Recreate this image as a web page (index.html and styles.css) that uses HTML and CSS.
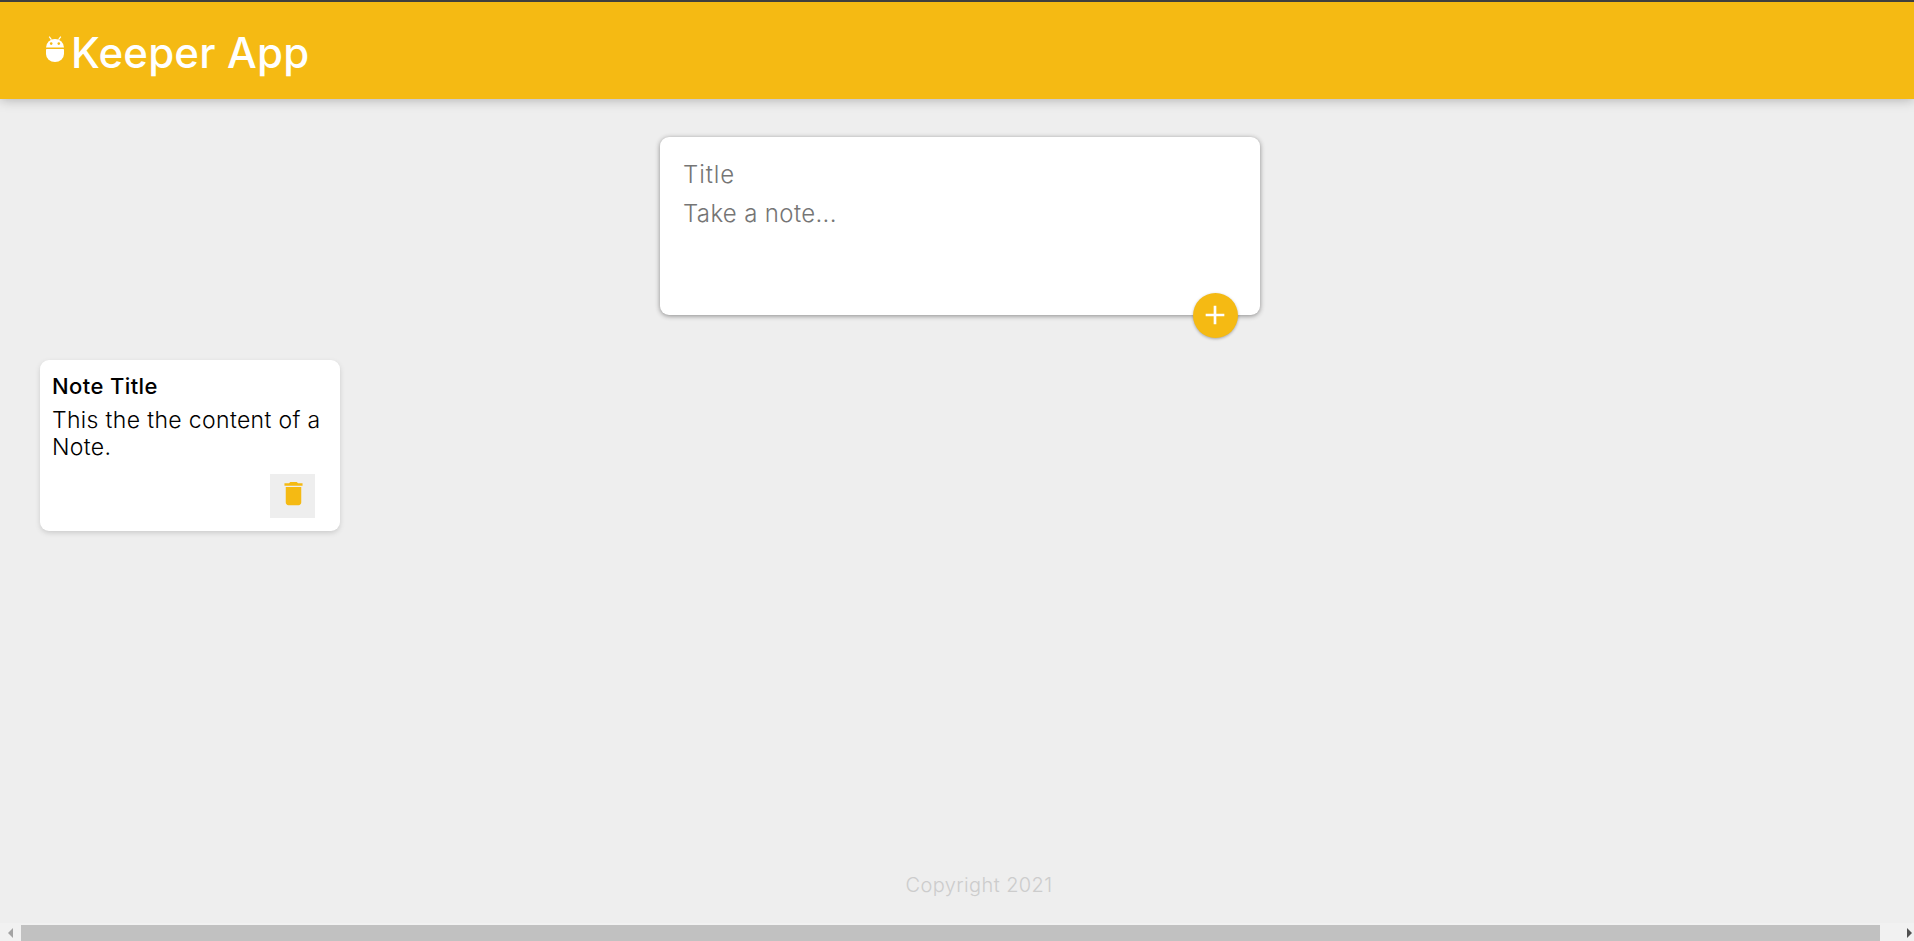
FILE: index.html
```html
<!DOCTYPE html>
<html lang="en">
<head>
<meta charset="utf-8">
<title>Keeper App</title>
<link rel="stylesheet" href="styles.css">
</head>
<body>
<header class="header">
  <svg class="logo" viewBox="0 0 18 26" aria-hidden="true">
    <path class="logo-fill" d="M1 13h16c.6 0 1 .4 1 1v4a9 8 0 0 1-18 0v-4c0-.6.4-1 1-1z"/>
    <path class="logo-fill" d="M0 11.5A9 8.5 0 0 1 18 11.5z"/>
    <path class="logo-line" d="M3.2 .6l2.2 3M14.8 .6l-2.2 3"/>
    <circle class="logo-eye" cx="5.2" cy="7.6" r="1.3"/>
    <circle class="logo-eye" cx="12.8" cy="7.6" r="1.3"/>
  </svg>
  <h1 class="brand">Keeper App</h1>
</header>
<main class="main">
  <div class="form-row">
    <form class="create">
      <div class="field title-field">Title</div>
      <div class="field">Take a note...</div>
      <button class="add" type="button" aria-label="Add">
        <svg class="add-icon" viewBox="0 0 24 24"><path d="M19 13h-6v6h-2v-6H5v-2h6V5h2v6h6v2z"/></svg>
      </button>
    </form>
  </div>
  <article class="note">
    <h2 class="note-title">Note Title</h2>
    <p class="note-text">This the the content of a Note.</p>
    <button class="delete" type="button" aria-label="Delete">
      <svg class="delete-icon" viewBox="0 0 24 24"><path d="M6 19c0 1.1.9 2 2 2h8c1.1 0 2-.9 2-2V7H6v12zM19 4h-3.5l-1-1h-5l-1 1H5v2h14V4z"/></svg>
    </button>
  </article>
</main>
<footer class="footer">Copyright 2021</footer>
<div class="scrollbar" aria-hidden="true">
  <div class="sb-btn sb-left"><span class="arrow-left"></span></div>
  <div class="sb-thumb"></div>
  <div class="sb-btn sb-right"><span class="arrow-right"></span></div>
</div>
</body>
</html>
```
FILE: styles.css
```css
* { box-sizing: border-box; }
html, body { margin: 0; height: 941px; overflow: hidden; }
body {
  background: #eeeeee;
  font-family: Inter, "Open Sans", sans-serif;
  display: flex;
  flex-direction: column;
}
.header {
  height: 99px;
  flex: none;
  background: #f5ba13;
  border-top: 2px solid #3e3e3e;
  box-shadow: 0 0 12px rgba(0, 0, 0, 0.3);
  display: flex;
  align-items: center;
  padding: 0 0 3px 46px;
  gap: 7px;
}
.logo { width: 18px; height: 26px; flex: none; }
.logo-fill { fill: #fff; }
.logo-line { stroke: #fff; stroke-width: 1.2; fill: none; }
.logo-eye { fill: #f5ba13; }
.brand {
  margin: 0;
  padding-top: 8px;
  color: #fff;
  font-family: Inter, sans-serif;
  font-size: 42px;
  font-weight: 500;
  line-height: 1;
  letter-spacing: 0.2px;
}
.main { flex: 1; padding: 38px 0 0 40px; }
.form-row { display: flex; justify-content: center; margin-left: -40px; }
.create {
  position: relative;
  width: 600px;
  height: 178px;
  margin-left: 6px;
  padding: 23px 24px 20px 23px;
  background: #fff;
  border-radius: 9px;
  box-shadow: 0 1px 5px #8a8989;
}
.field {
  font-size: 24px;
  line-height: 30px;
  color: #757575;
  font-weight: 300;
  letter-spacing: 0.35px;
}
.title-field { margin-bottom: 9px; letter-spacing: 0.9px; }
.add {
  position: absolute;
  right: 22px;
  bottom: -23px;
  width: 45px;
  height: 45px;
  padding: 0 2px 1px 0;
  border: 0;
  border-radius: 50%;
  background: #f5ba13;
  box-shadow: 0 1px 3px rgba(0, 0, 0, 0.3);
  display: flex;
  align-items: center;
  justify-content: center;
}
.add-icon { width: 32px; height: 32px; fill: #fff; }
.note {
  width: 300px;
  height: 171px;
  margin-top: 45px;
  padding: 13px 13px 13px 12px;
  background: #fff;
  border-radius: 9px;
  box-shadow: 0 2px 5px #ccc;
  display: flex;
  flex-direction: column;
}
.note-title {
  margin: 0 0 7px;
  font-size: 22px;
  line-height: 27px;
  font-weight: 500;
  color: #000;
  letter-spacing: 0.4px;
}
.note-text {
  margin: 0;
  font-size: 23px;
  line-height: 27px;
  font-weight: 300;
  color: #000;
  letter-spacing: 0.35px;
}
.delete {
  align-self: flex-end;
  width: 45px;
  height: 45px;
  margin: 13px 12px 0 0;
  padding: 0 0 6px 1px;
  border: 0;
  background: #eeeeee;
  display: flex;
  align-items: center;
  justify-content: center;
}
.delete-icon { width: 31px; height: 31px; fill: #f5ba13; }
.footer {
  flex: none;
  padding: 0 0 24px 44px;
  text-align: center;
  font-size: 20px;
  line-height: 28px;
  color: #ccc;
  letter-spacing: 0.4px;
  font-weight: 300;
}
.scrollbar {
  flex: none;
  height: 18px;
  background: #f1f1f1;
  display: flex;
  align-items: flex-end;
}
.sb-btn { height: 16px; display: flex; align-items: center; }
.sb-left { width: 21px; padding-left: 8px; }
.sb-right { width: 34px; justify-content: flex-end; padding-right: 2px; }
.sb-thumb { flex: 1; height: 16px; background: #c1c1c1; }
.arrow-left { border-style: solid; border-width: 5px 5px 5px 0; border-color: transparent #a3a3a3 transparent transparent; }
.arrow-right { border-style: solid; border-width: 5px 0 5px 5px; border-color: transparent transparent transparent #505050; }
```
